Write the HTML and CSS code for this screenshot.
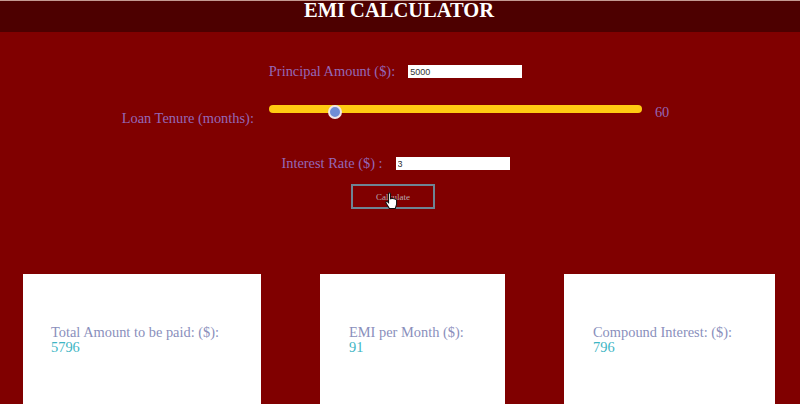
FILE: index.html
```html
<!DOCTYPE html>
<html lang="en">
<head>
    <meta charset="UTF-8">
    <title>EMI Calculator</title>
    <link rel="stylesheet" href="styles.css">
</head>
<body>
    <header>EMI CALCULATOR</header>
    <div class="form">
        <div class="row row-principal">
            <label for="principal">Principal Amount ($):</label>
            <input type="text" id="principal" value="5000">
        </div>
        <div class="row row-tenure">
            <label class="tenure-label" for="tenure">Loan Tenure (months):</label>
            <input type="range" id="tenure" min="0" max="365" value="60">
            <span class="tenure-value">60</span>
        </div>
        <div class="row row-rate">
            <label for="rate">Interest Rate ($) :</label>
            <input type="text" id="rate" value="3">
        </div>
        <div class="row">
            <button class="calc-btn">Calculate</button>
        </div>
    </div>
    <div class="cards">
        <div class="card">
            <p class="card-label">Total Amount to be paid: ($):</p>
            <p class="card-value">5796</p>
        </div>
        <div class="card">
            <p class="card-label">EMI per Month ($):</p>
            <p class="card-value">91</p>
        </div>
        <div class="card">
            <p class="card-label">Compound Interest: ($):</p>
            <p class="card-value">796</p>
        </div>
    </div>
    <!-- mouse pointer over the button -->
    <svg class="pointer" width="13" height="18" viewBox="0 0 12 17">
        <path d="M3.200 1.200c.8-.8 1.800-.3 1.800.8v4.400c1.600-.5 5.600-.2 5.800 1.400v3.800L9.600 15.600H4L.8 10.400c-.4-1 .6-1.800 1.400-1.200l1 1V2.200z" fill="#fff" stroke="#111" stroke-width="1"/>
    </svg>
</body>
</html>
```
FILE: styles.css
```css
* {
    margin: 0;
    padding: 0;
    box-sizing: border-box;
}
html, body {
    height: 404px;
    overflow: hidden;
}
body {
    position: relative;
    background-color: #800000;
    font-family: "Liberation Serif", "DejaVu Serif", serif;
}
header {
    height: 32px;
    background: #4d0000;
    border-top: 1px solid #c49a92;
    color: #fff;
    font-size: 20.500px;
    font-weight: bold;
    line-height: 19px;
    padding-right: 2px;
    text-align: center;
}
.form {
    padding: 32px 9px 0 0;
}
.row {
    display: flex;
    justify-content: center;
    align-items: center;
}
.row label, .tenure-value {
    color: #9468b8;
    font-size: 14.400px;
}
.row input[type="text"] {
    width: 114px;
    height: 13px;
    border: none;
    background: #fff;
    color: #333;
    padding-left: 2px;
    font-family: "Liberation Sans", Arial, sans-serif;
    font-size: 9px;
}
.row-principal {
    gap: 13px;
    height: 15px;
}
.row-tenure {
    margin-top: 22px;
    height: 24px;
    align-items: flex-start;
}
.tenure-label {
    margin: 9px 15px 0 0;
}
.tenure-value {
    margin: 3px 0 0 13px;
}
.row-rate {
    gap: 13px;
    margin-top: 31px;
    height: 15px;
}
input[type="range"] {
    -webkit-appearance: none;
    appearance: none;
    width: 373px;
    height: 16px;
    background: transparent;
}
input[type="range"]::-webkit-slider-runnable-track {
    height: 8px;
    background: #ffcb12;
    border-radius: 4px;
}
input[type="range"]::-webkit-slider-thumb {
    -webkit-appearance: none;
    width: 14px;
    height: 14px;
    margin-top: 0;
    background: #6f8ed6;
    border: 2px solid #f0e6e6;
    border-radius: 50%;
}
.calc-btn {
    width: 84px;
    height: 25px;
    margin: 13px 5px 0 0;
    background: transparent;
    border: 2px solid #6d8594;
    color: #b8aab0;
    font-family: "Liberation Serif", serif;
    font-size: 9px;
}
.cards {
    display: grid;
    grid-template-columns: 238px 185px 211px;
    justify-content: space-between;
    padding: 0 25px 0 23px;
    margin-top: 65px;
}
.card {
    height: 200px;
    background: #fff;
    padding: 51px 0 0 28px;
    font-size: 14.400px;
    line-height: 15px;
}
.card + .card {
    padding-left: 29px;
}
.card-label {
    color: #8a8fbc;
}
.card-value {
    color: #3db5c4;
}
.pointer {
    position: absolute;
    left: 385px;
    top: 192px;
}
```
